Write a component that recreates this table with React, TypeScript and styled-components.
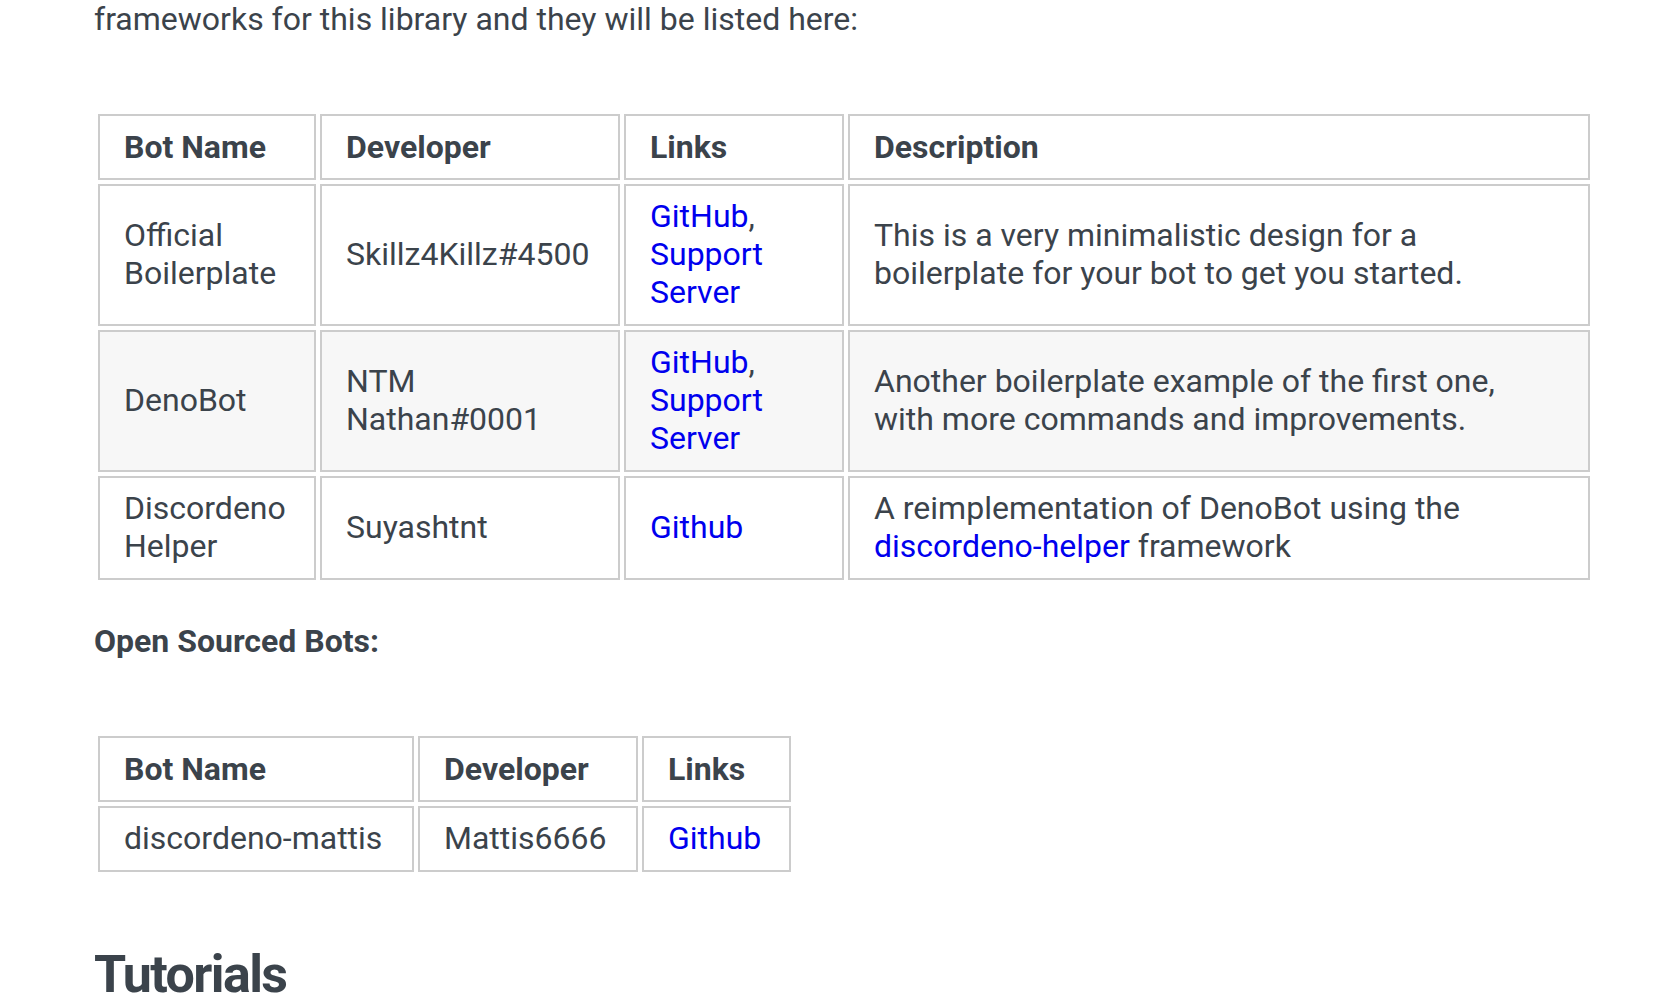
import React from "react";
import styled, { createGlobalStyle } from "styled-components";

const GlobalStyle = createGlobalStyle`
  html, body {
    margin: 0;
    padding: 0;
    background: #ffffff;
  }
  body {
    font-family: Roboto, "Liberation Sans", Arial, sans-serif;
    color: #3b434b;
    font-size: 32px;
    line-height: 38px;
    -webkit-font-smoothing: antialiased;
  }
`;

const Page = styled.main`
  padding: 0 0 0 94px;
  width: 1500px;
`;

const Paragraph = styled.p<{ $mt?: number; $bold?: boolean }>`
  margin: ${(p) => p.$mt ?? 0}px 0 0;
  font-weight: ${(p) => (p.$bold ? 700 : 400)};
`;

const Heading = styled.h2<{ $mt: number }>`
  margin: ${(p) => p.$mt}px 0 0;
  font-size: 52px;
  line-height: 62px;
  font-weight: 700;
  letter-spacing: -1.6px;
`;

const Table = styled.table<{ $mt: number; $width: number }>`
  margin-top: ${(p) => p.$mt}px;
  width: ${(p) => p.$width}px;
  border-collapse: separate;
  border-spacing: 4px;
  table-layout: fixed;
`;

const HeadCell = styled.th<{ $w: number }>`
  box-sizing: border-box;
  width: ${(p) => p.$w}px;
  border: 2px solid #cccccc;
  padding: 12px 24px;
  text-align: left;
  font-weight: 700;
  vertical-align: middle;
`;

const Row = styled.tr<{ $shade?: boolean }>`
  & > td {
    background: ${(p) => (p.$shade ? "#f7f7f7" : "#ffffff")};
  }
`;

const Cell = styled.td`
  box-sizing: border-box;
  border: 2px solid #cccccc;
  padding: 11px 24px 13px;
  text-align: left;
  vertical-align: middle;
`;

const DescCell = styled(Cell)`
  padding-right: 34px;
`;

const Link = styled.a`
  color: #0000ee;
  text-decoration: none;
`;

type Col = { label: string; w: number };

const mainCols: Col[] = [
  { label: "Bot Name", w: 218 },
  { label: "Developer", w: 300 },
  { label: "Links", w: 220 },
  { label: "Description", w: 742 },
];

const openCols: Col[] = [
  { label: "Bot Name", w: 316 },
  { label: "Developer", w: 220 },
  { label: "Links", w: 149 },
];

const HeaderRow: React.FC<{ cols: Col[] }> = ({ cols }) => (
  <thead>
    <tr>
      {cols.map((c) => (
        <HeadCell key={c.label} $w={c.w}>
          {c.label}
        </HeadCell>
      ))}
    </tr>
  </thead>
);

export default function App() {
  return (
    <>
      <GlobalStyle />
      <Page>
        <Paragraph $mt={0}>
          frameworks for this library and they will be listed here:
        </Paragraph>

        <Table $mt={72} $width={1500}>
          <HeaderRow cols={mainCols} />
          <tbody>
            <Row>
              <Cell>Official Boilerplate</Cell>
              <Cell>Skillz4Killz#4500</Cell>
              <Cell>
                <Link href="#">GitHub</Link>, <Link href="#">Support Server</Link>
              </Cell>
              <DescCell>
                This is a very minimalistic design for a boilerplate for your bot to get you
                started.
              </DescCell>
            </Row>
            <Row $shade>
              <Cell>DenoBot</Cell>
              <Cell>NTM Nathan#0001</Cell>
              <Cell>
                <Link href="#">GitHub</Link>, <Link href="#">Support Server</Link>
              </Cell>
              <DescCell>
                Another boilerplate example of the first one, with more commands and
                improvements.
              </DescCell>
            </Row>
            <Row>
              <Cell>Discordeno Helper</Cell>
              <Cell>Suyashtnt</Cell>
              <Cell>
                <Link href="#">Github</Link>
              </Cell>
              <DescCell>
                A reimplementation of DenoBot using the{" "}
                <Link href="#">discordeno-helper</Link> framework
              </DescCell>
            </Row>
          </tbody>
        </Table>

        <Paragraph $mt={38} $bold>
          Open Sourced Bots:
        </Paragraph>

        <Table $mt={72} $width={701}>
          <HeaderRow cols={openCols} />
          <tbody>
            <Row>
              <Cell>discordeno-mattis</Cell>
              <Cell>Mattis6666</Cell>
              <Cell>
                <Link href="#">Github</Link>
              </Cell>
            </Row>
          </tbody>
        </Table>

        <Heading $mt={68}>Tutorials</Heading>
      </Page>
    </>
  );
}
